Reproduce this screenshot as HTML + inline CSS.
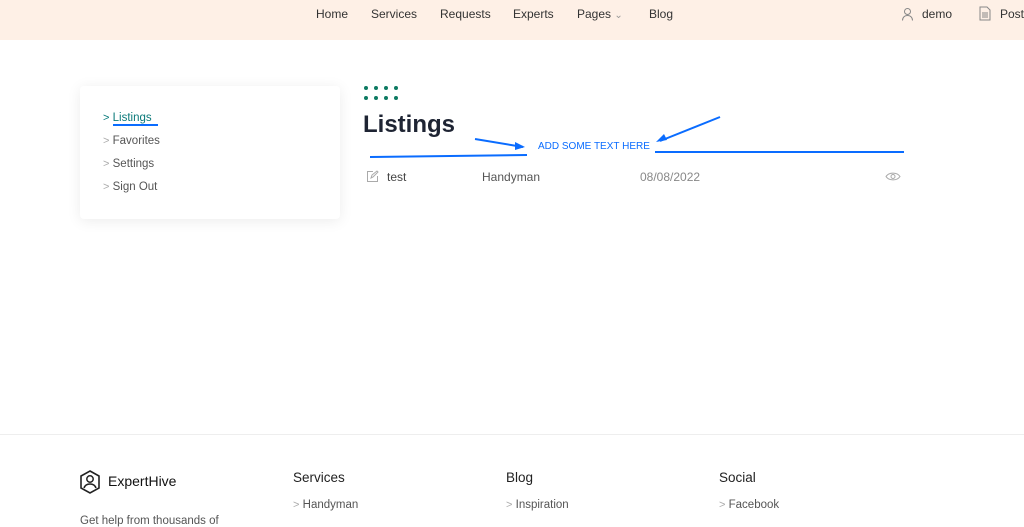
<!DOCTYPE html>
<html><head><meta charset="utf-8"><style>
*{margin:0;padding:0;box-sizing:border-box}
body{width:1024px;height:523px;overflow:hidden;background:#fff;font-family:"Liberation Sans",sans-serif;position:relative;color:#333}
.hdr{position:absolute;left:0;top:0;width:1024px;height:40px;background:#fef0e6}
.t{position:absolute;white-space:nowrap}
.nav{font-size:12px;color:#333;top:7px}
.card{position:absolute;left:80px;top:86px;width:260px;height:133px;background:#fff;box-shadow:0 2px 14px rgba(0,0,0,.08);border-radius:4px}
.side{font-size:11.5px;color:#555}
.chev{color:#aaa;font-size:11px;font-weight:lighter}
.dot{position:absolute;width:4px;height:4px;border-radius:50%;background:#0d7a62}
.bl{position:absolute;background:#0a6cff;height:2px}
.ft{font-size:13.5px;color:#222}
.fl{font-size:11.5px;color:#555}
</style></head><body>
<div class="hdr"></div>
<div class="t nav" style="left:316px">Home</div>
<div class="t nav" style="left:371px">Services</div>
<div class="t nav" style="left:440px">Requests</div>
<div class="t nav" style="left:513px">Experts</div>
<div class="t nav" style="left:577px">Pages <span style="color:#999;font-size:10px">&#8964;</span></div>
<div class="t nav" style="left:649px">Blog</div>
<svg style="position:absolute;left:901px;top:7px" width="13" height="14" viewBox="0 0 13 14"><circle cx="6.5" cy="4.5" r="3" fill="none" stroke="#888"/><path d="M1.5 13.5c0-3 2-5 5-5s5 2 5 5" fill="none" stroke="#888"/></svg>
<div class="t nav" style="left:922px">demo</div>
<svg style="position:absolute;left:979px;top:6px" width="12" height="15" viewBox="0 0 12 15"><path d="M1 1h7l3 3v10H1z" fill="none" stroke="#888"/><path d="M3 7h6M3 9h6M3 11h6" stroke="#888"/></svg>
<div class="t nav" style="left:1000px">Post</div>

<div class="card"></div>
<div class="t side" style="left:103px;top:112px"><span class="chev" style="color:#077">&gt;</span> <span style="color:#0b7a7a">Listings</span></div>
<div class="bl" style="left:113px;top:124px;width:45px"></div>
<div class="t side" style="left:103px;top:135px"><span class="chev">&gt;</span> Favorites</div>
<div class="t side" style="left:103px;top:158px"><span class="chev">&gt;</span> Settings</div>
<div class="t side" style="left:103px;top:181px"><span class="chev">&gt;</span> Sign Out</div>

<div class="dot" style="left:364px;top:86px"></div><div class="dot" style="left:374px;top:86px"></div><div class="dot" style="left:384px;top:86px"></div><div class="dot" style="left:394px;top:86px"></div>
<div class="dot" style="left:364px;top:96px"></div><div class="dot" style="left:374px;top:96px"></div><div class="dot" style="left:384px;top:96px"></div><div class="dot" style="left:394px;top:96px"></div>
<div class="t" style="left:363px;top:111px;font-size:24px;font-weight:bold;color:#1e2433">Listings</div>
<div class="t" style="left:538px;top:141px;font-size:10px;color:#0a6cff">ADD SOME TEXT HERE</div>
<svg style="position:absolute;left:360px;top:110px" width="560" height="50"><g stroke="#0a6cff" stroke-width="2" fill="none"><path d="M10 47L167 45"/><path d="M295 42L544 42"/><path d="M115 29L163 37"/><path d="M360 7L300 31"/></g><path d="M165 37l-10-5 0 8z" fill="#0a6cff"/><path d="M296 32l8-8 3 6z" fill="#0a6cff"/></svg>
<svg style="position:absolute;left:366px;top:170px" width="13" height="13" viewBox="0 0 13 13"><path d="M7 1.5H1.5v10h10V6" fill="none" stroke="#aaa"/><path d="M5 8l1-3 5-4 1 1-5 5z" fill="none" stroke="#aaa"/></svg>
<div class="t" style="left:387px;top:170px;font-size:12px;color:#444">test</div>
<div class="t" style="left:482px;top:170px;font-size:12px;color:#555">Handyman</div>
<div class="t" style="left:640px;top:170px;font-size:12px;color:#888">08/08/2022</div>
<svg style="position:absolute;left:885px;top:171px" width="16" height="11" viewBox="0 0 16 11"><path d="M1 5.5C4 1 12 1 15 5.5 12 10 4 10 1 5.5z" fill="none" stroke="#aaa"/><circle cx="8" cy="5.5" r="2" fill="none" stroke="#aaa"/></svg>

<div style="position:absolute;left:0;top:434px;width:1024px;height:1px;background:#eee"></div>
<svg style="position:absolute;left:79px;top:470px" width="22" height="24" viewBox="0 0 22 24"><path d="M11 1l9 5v12l-9 5-9-5V6z" fill="none" stroke="#222" stroke-width="1.6"/><circle cx="11" cy="9" r="3.2" fill="none" stroke="#222" stroke-width="1.5"/><path d="M5 18c1-3 3-4 6-4s5 1 6 4" fill="none" stroke="#222" stroke-width="1.5"/></svg>
<div class="t" style="left:108px;top:473px;font-size:14px;color:#111">ExpertHive</div>
<div class="t fl" style="left:80px;top:515px">Get help from thousands of</div>
<div class="t ft" style="left:293px;top:470px">Services</div>
<div class="t ft" style="left:506px;top:470px">Blog</div>
<div class="t ft" style="left:719px;top:470px">Social</div>
<div class="t fl" style="left:293px;top:499px"><span class="chev">&gt;</span> Handyman</div>
<div class="t fl" style="left:506px;top:499px"><span class="chev">&gt;</span> Inspiration</div>
<div class="t fl" style="left:719px;top:499px"><span class="chev">&gt;</span> Facebook</div>
</body></html>
